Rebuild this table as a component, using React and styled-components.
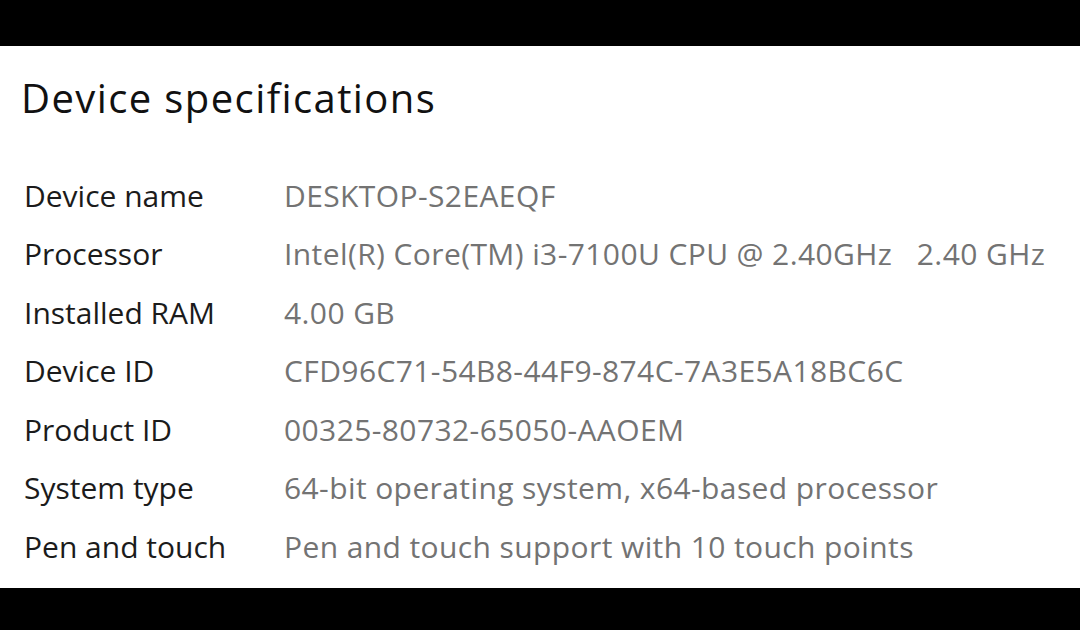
import styled, { createGlobalStyle } from "styled-components";

const GlobalStyle = createGlobalStyle`
  html, body {
    margin: 0;
    padding: 0;
    background: #000;
  }
`;

const Screen = styled.div`
  width: 1080px;
  height: 630px;
  background: #000;
  padding-top: 46px;
  box-sizing: border-box;
`;

const Panel = styled.section`
  height: 542px;
  background: #fff;
  padding: 26px 0 0 21px;
  box-sizing: border-box;
  font-family: "Open Sans", "Noto Sans", sans-serif;
`;

const Title = styled.h1`
  margin: 0;
  font-size: 40px;
  line-height: 52px;
  letter-spacing: 1.4px;
  font-weight: 400;
  color: #111;
`;

const SpecList = styled.dl`
  margin: 42px 0 0 3px;
  display: grid;
  grid-template-columns: 260px 1fr;
  grid-auto-rows: 58.5px;
  align-items: center;
  font-size: 30px;
`;

const Label = styled.dt`
  color: #1b1b1b;
  white-space: nowrap;
`;

const Value = styled.dd`
  margin: 0;
  color: #737373;
  letter-spacing: 0.4px;
  white-space: pre;
`;

const specs = [
  ["Device name", "DESKTOP-S2EAEQF"],
  ["Processor", "Intel(R) Core(TM) i3-7100U CPU @ 2.40GHz   2.40 GHz"],
  ["Installed RAM", "4.00 GB"],
  ["Device ID", "CFD96C71-54B8-44F9-874C-7A3E5A18BC6C"],
  ["Product ID", "00325-80732-65050-AAOEM"],
  ["System type", "64-bit operating system, x64-based processor"],
  ["Pen and touch", "Pen and touch support with 10 touch points"],
];

const App = () => {
  return (
    <>
      <GlobalStyle />
      <Screen>
        <Panel>
          <Title>Device specifications</Title>
          <SpecList>
            {specs.map(([label, value]) => [
              <Label key={label}>{label}</Label>,
              <Value key={label + "-v"}>{value}</Value>,
            ])}
          </SpecList>
        </Panel>
      </Screen>
    </>
  );
};

export default App;
